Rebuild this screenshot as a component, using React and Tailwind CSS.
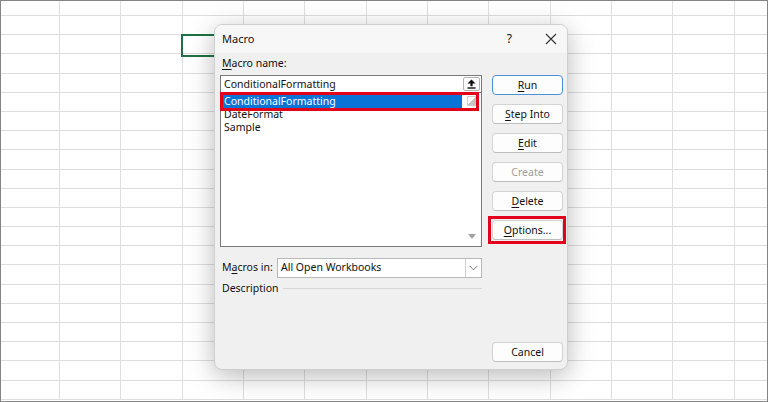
import React from 'react'

const COLS = 13
const ROWS = 21

function Sheet() {
  const cells = Array.from({ length: COLS * ROWS })
  return (
    <div className="grid grid-cols-[59px_repeat(12,61.33px)] grid-rows-[15px_repeat(20,19.2px)] w-[820px]">
      {cells.map((_, i) => (
        <div key={i} className="border-r border-b border-[#dedede]" />
      ))}
    </div>
  )
}

function Btn({ children, disabled, primary }) {
  return (
    <div
      className={`h-[20px] w-full rounded-[4px] border bg-[#fdfdfd] text-center text-[10.5px] leading-[18px] ${
        primary ? 'border-[#4b91d8]' : 'border-[#d3d3d3] border-b-[#bdbdbd]'
      } ${disabled ? 'text-[#9d9d9d]' : 'text-[#111]'}`}
    >
      {children}
    </div>
  )
}

export default function App() {
  return (
    <div className="relative w-[768px] h-[402px] overflow-hidden bg-white border border-[#858585] font-['Noto_Sans',sans-serif]">
      <Sheet />

      {/* active cell */}
      <div className="absolute left-[180px] top-[33px] w-[64px] h-[23px] border-2 border-[#1f7145]" />

      {/* Macro dialog */}
      <div className="absolute left-[213px] top-[23px] w-[354px] h-[346px] flex flex-col rounded-[8px] border border-[#cfcfcf] bg-[#f0f0f0] shadow-[0_6px_26px_rgba(0,0,0,0.28)] overflow-hidden text-[#111]">
        {/* title bar */}
        <div className="h-[28px] flex items-center pl-[7px] pr-[10px] bg-[#f7f7f7]">
          <span className="text-[11px]">Macro</span>
          <span className="ml-auto mr-[33px] text-[12px]">?</span>
          <svg width="12" height="12" viewBox="0 0 12 12" className="mb-px">
            <path d="M1 1 L11 11 M11 1 L1 11" stroke="#333" strokeWidth="1.1" fill="none" />
          </svg>
        </div>

        {/* body */}
        <div className="flex-1 flex gap-[10px] pl-[5px] pr-[4px] pt-[3px]">
          {/* left column */}
          <div className="w-[262px] flex flex-col text-[10.5px]">
            <div className="h-[14px] leading-[14px] pl-[2px] mb-[5px]">
              <u className="underline-offset-2">M</u>acro name:
            </div>

            {/* name input */}
            <div className="h-[18px] flex items-center border border-[#7a7a7a] bg-white pl-[3px] pr-px">
              <span className="leading-[14px]">ConditionalFormatting</span>
              <div className="ml-auto w-[17px] h-[14px] flex items-center justify-center border border-[#b5b5b5] rounded-[2px] bg-white">
                <svg width="9" height="10" viewBox="0 0 9 10">
                  <path d="M4.5 0.5 L8.5 4.5 L5.6 4.5 L5.6 7.2 L3.4 7.2 L3.4 4.5 L0.5 4.5 Z" fill="#111" />
                  <rect x="0.5" y="8.3" width="8" height="1.4" fill="#111" />
                </svg>
              </div>
            </div>

            {/* list box */}
            <div className="relative h-[154px] flex border border-t-0 border-[#7a7a7a] bg-white">
              <div className="flex-1 pt-[2px]">
                <div className="h-[13px] leading-[13px] pl-[3px] bg-[#0a74d6] text-white">ConditionalFormatting</div>
                <div className="h-[13px] leading-[13px] pl-[3px]">DateFormat</div>
                <div className="h-[13px] leading-[13px] pl-[3px]">Sample</div>
              </div>
              <div className="w-[19px] flex flex-col items-center justify-between pt-[3px] pb-[7px]">
                <div className="w-[10px] h-[10px] border border-[#cfcfcf] bg-linear-to-br from-white from-50% to-[#c4c4c4] to-50%" />
                <svg width="8" height="5" viewBox="0 0 8 5">
                  <path d="M0 0 L8 0 L4 5 Z" fill="#a3a3a3" />
                </svg>
              </div>
              <div className="absolute -left-px -top-px w-[259px] h-[19px] border-[3px] border-[#e3001b]" />
            </div>

            {/* macros in */}
            <div className="mt-[11px] flex items-center h-[20px]">
              <span className="w-[57px] pl-[2px]">
                M<u className="underline-offset-2">a</u>cros in:
              </span>
              <div className="flex-1 h-[20px] flex items-center border border-[#b9b9b9] bg-white pl-[3px]">
                <span>All Open Workbooks</span>
                <div className="ml-auto w-[16px] h-full flex items-center justify-center border-l border-[#d0d0d0]">
                  <svg width="9" height="6" viewBox="0 0 9 6">
                    <path d="M0.5 0.8 L4.5 4.8 L8.5 0.8" stroke="#777" strokeWidth="1" fill="none" />
                  </svg>
                </div>
              </div>
            </div>

            {/* description */}
            <div className="mt-[4px] h-[12px] flex items-center pl-[2px]">
              <span className="leading-[12px]">Description</span>
              <div className="flex-1 ml-[4px] h-px bg-[#d6d6d6]" />
            </div>
          </div>

          {/* right column */}
          <div className="w-[71px] flex flex-col gap-[9px] pt-[19px] pb-[7px]">
            <Btn primary>
              <u className="underline-offset-2">R</u>un
            </Btn>
            <Btn>
              <u className="underline-offset-2">S</u>tep Into
            </Btn>
            <Btn>
              <u className="underline-offset-2">E</u>dit
            </Btn>
            <Btn disabled>Create</Btn>
            <Btn>
              <u className="underline-offset-2">D</u>elete
            </Btn>
            <div className="relative">
              <Btn>
                <u className="underline-offset-2">O</u>ptions...
              </Btn>
              <div className="absolute -left-[4px] -top-[4px] -right-[3px] -bottom-[4px] border-[3px] border-[#e3001b]" />
            </div>
            <div className="mt-auto">
              <Btn>Cancel</Btn>
            </div>
          </div>
        </div>
      </div>
    </div>
  )
}
